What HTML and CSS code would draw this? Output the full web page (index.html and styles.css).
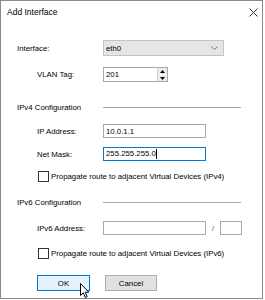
FILE: index.html
```html
<!DOCTYPE html>
<html>
<head>
<meta charset="utf-8">
<link rel="stylesheet" href="styles.css">
</head>
<body>
<div class="window">
  <div class="titlebar">
    <span class="title">Add Interface</span>
    <svg class="close" width="9" height="9" viewBox="0 0 9 9"><path d="M0.5 0.5 L8.5 8.5 M8.5 0.5 L0.5 8.5" stroke="#333" stroke-width="1" fill="none"/></svg>
  </div>
  <div class="content">
    <div class="row r-iface">
      <span class="lbl">Interface:</span>
      <div class="select"><span>eth0</span>
        <svg class="chev" width="7" height="4" viewBox="0 0 7 4"><path d="M0.5 0.5 L3.5 3.5 L6.5 0.5" stroke="#777" fill="none"/></svg>
      </div>
    </div>
    <div class="row r-vlan">
      <span class="lbl ind">VLAN Tag:</span>
      <div class="spin">
        <div class="spin-input">201</div>
        <div class="spin-btns">
          <div class="sb"><svg width="5" height="3" viewBox="0 0 5 3"><path d="M2.5 0 L5 3 L0 3 Z" fill="#000"/></svg></div>
          <div class="sb"><svg width="5" height="3" viewBox="0 0 5 3"><path d="M0 0 L5 0 L2.5 3 Z" fill="#000"/></svg></div>
        </div>
      </div>
    </div>
    <div class="group g4"><span class="gtitle">IPv4 Configuration</span><div class="rule"></div></div>
    <div class="row r-ip">
      <span class="lbl ind">IP Address:</span>
      <div class="input wide">10.0.1.1</div>
    </div>
    <div class="row r-nm">
      <span class="lbl ind">Net Mask:</span>
      <div class="input wide focus"><span class="caret">255.255.255.0</span></div>
    </div>
    <div class="row r-cb1">
      <label class="check"><span class="box"></span><span>Propagate route to adjacent Virtual Devices (IPv4)</span></label>
    </div>
    <div class="group g6"><span class="gtitle">IPv6 Configuration</span><div class="rule"></div></div>
    <div class="row r-v6">
      <span class="lbl ind">IPv6 Address:</span>
      <div class="input wide"></div>
      <span class="slash">/</span>
      <div class="input small"></div>
    </div>
    <div class="row r-cb2">
      <label class="check"><span class="box"></span><span>Propagate route to adjacent Virtual Devices (IPv6)</span></label>
    </div>
    <div class="row r-btn">
      <div class="btn ok">OK</div>
      <div class="btn cancel">Cancel</div>
    </div>
  </div>
  <svg class="cursor" width="10" height="16" viewBox="0 0 10 16"><path d="M0.5 0.5 L0.5 12.5 L3.3 9.8 L5.3 14.5 L7.2 13.7 L5.2 9.2 L8.8 9.2 Z" fill="#fff" stroke="#000" stroke-width="1" stroke-linejoin="round"/></svg>
</div>
</body>
</html>
```

FILE: styles.css
```css
* { box-sizing: border-box; }
html, body { margin: 0; padding: 0; background: #fff; }
body {
  font-family: "Liberation Sans", Arial, sans-serif;
  font-size: 7.8px;
  color: #000;
}
.window {
  position: relative;
  width: 263px;
  height: 299px;
  border: 1px solid #8a8a8a;
  background: #fff;
}
.titlebar {
  height: 22px;
  display: flex;
  align-items: center;
  justify-content: space-between;
  padding: 0 4px 0 6px;
}
.title { font-size: 8.5px; }
.content { padding-left: 16px; }
.row { display: flex; align-items: center; }
.lbl { width: 86px; flex: none; }
.lbl.ind { padding-left: 20px; }

.r-iface { margin-top: 17px; height: 16px; }
.r-vlan { margin-top: 11px; height: 15px; }
.g4 { margin-top: 20px; }
.r-ip { margin-top: 12px; height: 14px; }
.r-nm { margin-top: 9px; height: 14px; }
.r-cb1 { margin-top: 10px; height: 11px; }
.g6 { margin-top: 15px; }
.r-v6 { margin-top: 14px; height: 14px; }
.r-cb2 { margin-top: 13px; height: 11px; }
.r-btn { margin-top: 16px; height: 16px; padding-left: 20px; gap: 15px; }

.select {
  width: 121px;
  height: 16px;
  background: #e5e5e5;
  border: 1px solid #c4c4c4;
  display: flex;
  align-items: center;
  justify-content: space-between;
  padding: 0 5px 0 2px;
}
.chev { display: block; }

.spin { display: flex; height: 15px; }
.spin-input {
  width: 54px;
  height: 15px;
  border: 1px solid #a8a8a8;
  border-right: none;
  padding-left: 2px;
  display: flex;
  align-items: center;
}
.spin-btns {
  width: 11px;
  display: flex;
  flex-direction: column;
  border: 1px solid #a8a8a8;
  border-left: 1px solid #d0d0d0;
  background: #fff;
}
.sb {
  flex: 1;
  display: flex;
  align-items: center;
  justify-content: center;
  background: #ececec;
}
.sb + .sb { border-top: 1px solid #fff; }
.sb svg { display: block; }

.group { display: flex; align-items: center; height: 10px; }
.gtitle { width: 86px; flex: none; }
.rule { width: 138px; height: 1px; background: #a6a6a6; }

.input {
  height: 14px;
  border: 1px solid #a8a8a8;
  padding-left: 2px;
  display: flex;
  align-items: center;
  background: #fff;
}
.input.wide { width: 103px; }
.input.small { width: 22px; }
.input.focus { border-color: #0078d7; }
.caret { border-right: 1px solid #000; padding-right: 0; line-height: 10px; }
.slash { width: 14px; text-align: center; color: #555; }

.check { display: flex; align-items: center; padding-left: 21px; }
.box {
  width: 11px;
  height: 11px;
  border: 1px solid #333;
  background: #fff;
  margin-right: 2px;
  flex: none;
}

.btn {
  height: 16px;
  display: flex;
  align-items: center;
  justify-content: center;
}
.ok { width: 53px; background: #e5f1fb; border: 1px solid #0078d7; }
.cancel { width: 52px; background: #e1e1e1; border: 1px solid #adadad; }

.cursor { position: absolute; left: 79px; top: 282px; }
```
